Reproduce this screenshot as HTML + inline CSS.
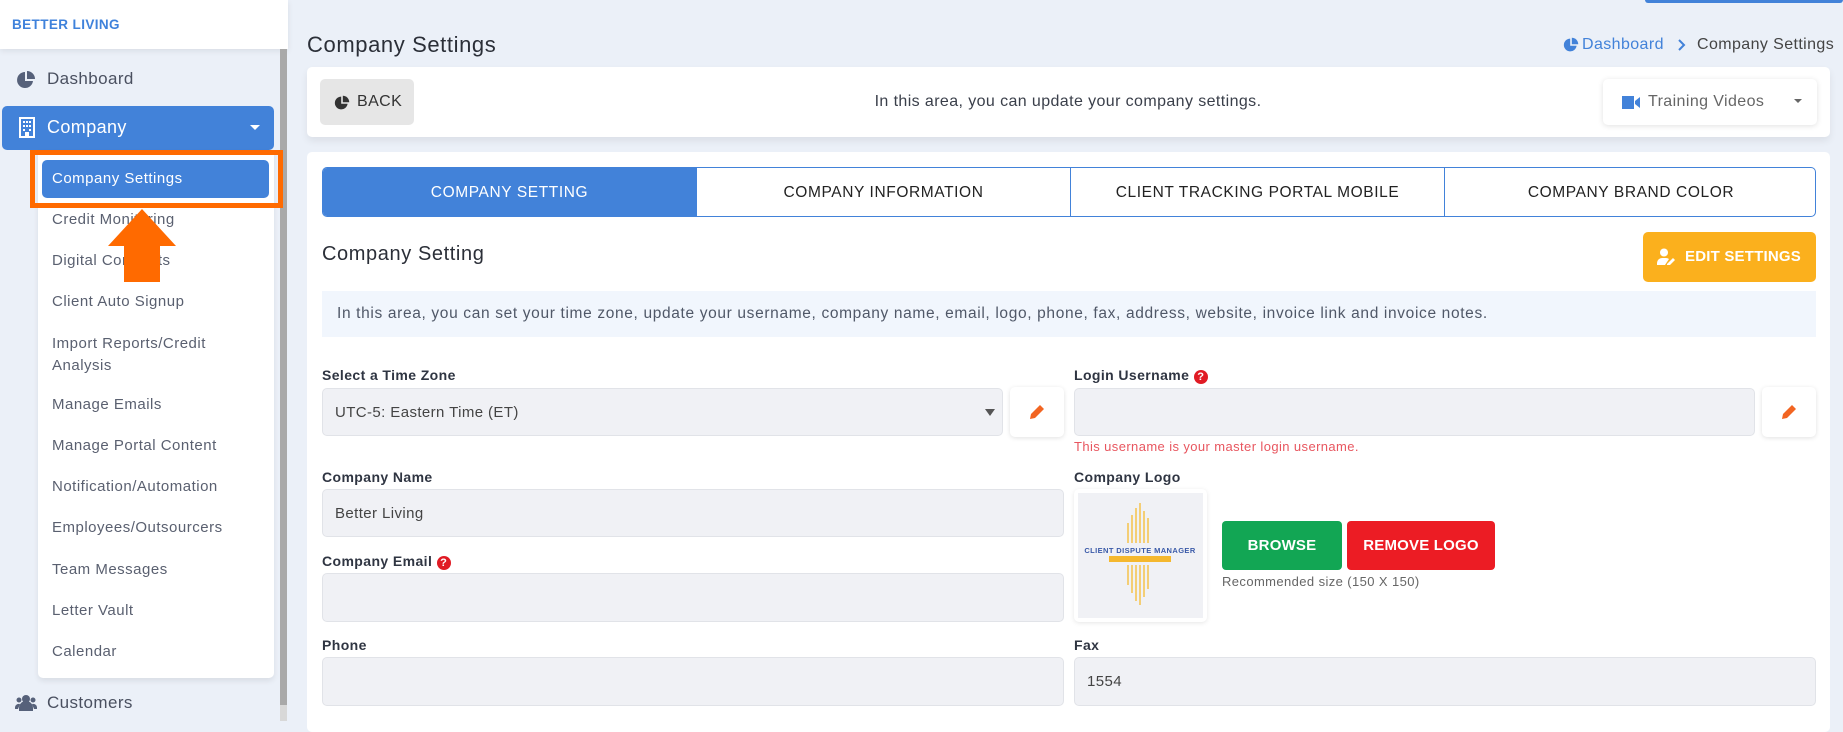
<!DOCTYPE html>
<html><head><meta charset="utf-8"><style>
*{box-sizing:border-box;margin:0;padding:0}
body{width:1843px;height:721px;overflow:hidden;background:#ebf0f8;font-family:"Liberation Sans",sans-serif;color:#3a3f4a;position:relative;letter-spacing:.4px}
.a{position:absolute}
.lbl{font-size:14px;font-weight:bold;color:#2f3542}
.inp{background:#f0f1f5;border:1px solid #e1e3e8;border-radius:5px}
.pen{background:#fff;border-radius:5px;box-shadow:0 1px 5px rgba(0,0,0,.12);display:flex;align-items:center;justify-content:center}
.tab{position:absolute;top:0;height:50px;display:flex;align-items:center;justify-content:center;font-size:15.5px;color:#222;border-left:1px solid #4282d9;letter-spacing:.6px}
.sub{position:absolute;left:52px;font-size:15px;color:#5a6070;letter-spacing:.5px}
.q{display:inline-block;width:14px;height:14px;border-radius:50%;background:#e01b24;color:#fff;font-size:11px;text-align:center;line-height:14px;vertical-align:0;letter-spacing:0}
</style></head><body>
<div class="a" style="left:0;top:0;width:288px;height:49px;background:#fff;box-shadow:0 2px 6px rgba(0,0,0,.08)"></div>
<div class="a" style="left:12px;top:17px;font-size:13.5px;font-weight:bold;color:#3f82db">BETTER LIVING</div>
<div class="a" style="left:280px;top:49px;width:7px;height:656px;background:#a9a9a9"></div>
<div class="a" style="left:280px;top:705px;width:7px;height:16px;background:#d8d8d8"></div>
<svg class="a" style="left:16px;top:70px" width="20" height="20" viewBox="0 0 20 20"><path d="M9 2a8 8 0 1 0 8 9H9z" fill="#56617a"/><path d="M11 1v8h8a8 8 0 0 0-8-8z" fill="#56617a"/></svg>
<div class="a" style="left:47px;top:69px;font-size:17px;color:#4a5060">Dashboard</div>
<div class="a" style="left:2px;top:106px;width:272px;height:44px;background:#4282d9;border-radius:5px"></div>
<svg class="a" style="left:19px;top:117px" width="16" height="21" viewBox="0 0 16 21"><rect x="1" y="1" width="14" height="19" fill="none" stroke="#fff" stroke-width="2"/><g fill="#fff"><rect x="4" y="4" width="2" height="2"/><rect x="7" y="4" width="2" height="2"/><rect x="10" y="4" width="2" height="2"/><rect x="4" y="8" width="2" height="2"/><rect x="7" y="8" width="2" height="2"/><rect x="10" y="8" width="2" height="2"/><rect x="4" y="12" width="2" height="2"/><rect x="10" y="12" width="2" height="2"/><rect x="6" y="15" width="4" height="5"/></g></svg>
<div class="a" style="left:47px;top:117px;font-size:18px;color:#fff">Company</div>
<div class="a" style="left:250px;top:125px;border:5px solid transparent;border-top-color:#fff"></div>
<div class="a" style="left:38px;top:150px;width:236px;height:528px;background:#fff;border-radius:0 0 5px 5px;box-shadow:0 3px 6px rgba(0,0,0,.08)"></div>
<div class="a" style="left:42px;top:160px;width:227px;height:38px;background:#4282d9;border-radius:5px"></div>
<div class="a" style="left:52px;top:170px;font-size:15px;color:#fff;letter-spacing:.5px">Company Settings</div>
<div class="a" style="left:30px;top:150px;width:253px;height:58px;border:5px solid #ff6a00"></div>
<div class="sub" style="top:211px">Credit Monitoring</div>
<div class="sub" style="top:252px">Digital Contracts</div>
<div class="sub" style="top:293px">Client Auto Signup</div>
<div class="sub" style="top:333px;line-height:22px">Import Reports/Credit<br>Analysis</div>
<div class="sub" style="top:396px">Manage Emails</div>
<div class="sub" style="top:437px">Manage Portal Content</div>
<div class="sub" style="top:478px">Notification/Automation</div>
<div class="sub" style="top:519px">Employees/Outsourcers</div>
<div class="sub" style="top:561px">Team Messages</div>
<div class="sub" style="top:602px">Letter Vault</div>
<div class="sub" style="top:643px">Calendar</div>
<svg class="a" style="left:108px;top:209px" width="69" height="74" viewBox="0 0 69 74"><path d="M34 0L68 37H52V73H16V37H0z" fill="#ff6a00"/></svg>
<svg class="a" style="left:15px;top:694px" width="22" height="17" viewBox="0 0 22 17"><g fill="#56617a"><circle cx="11" cy="5" r="4"/><circle cx="4" cy="6" r="2.5"/><circle cx="18" cy="6" r="2.5"/><path d="M4 17v-3a7 7 0 0 1 14 0v3z"/><path d="M0 15v-2a4 4 0 0 1 5-3l-2 5z"/><path d="M22 15v-2a4 4 0 0 0-5-3l2 5z"/></g></svg>
<div class="a" style="left:47px;top:693px;font-size:17px;color:#4a5060">Customers</div>
<div class="a" style="left:1645px;top:0;width:198px;height:3px;background:#4282d9;border-radius:0 0 3px 3px"></div>
<div class="a" style="left:307px;top:32px;font-size:22px;color:#2b2f38;letter-spacing:.6px">Company Settings</div>
<svg class="a" style="left:1563px;top:37px" width="16" height="16" viewBox="0 0 20 20"><path d="M9 2a8 8 0 1 0 8 9H9z" fill="#4282d9"/><path d="M11 1v8h8a8 8 0 0 0-8-8z" fill="#4282d9"/></svg>
<div class="a" style="left:1582px;top:36px;font-size:16px;color:#4282d9">Dashboard</div>
<svg class="a" style="left:1677px;top:38px" width="10" height="14" viewBox="0 0 10 14"><path d="M2 2l5 5-5 5" fill="none" stroke="#4282d9" stroke-width="2"/></svg>
<div class="a" style="left:1697px;top:36px;font-size:16px;color:#444">Company Settings</div>
<div class="a" style="left:307px;top:67px;width:1523px;height:70px;background:#fff;border-radius:5px;box-shadow:0 4px 8px rgba(0,0,0,.07)"></div>
<div class="a" style="left:320px;top:79px;width:94px;height:46px;background:#e6e6e6;border-radius:5px"></div>
<svg class="a" style="left:334px;top:95px" width="16" height="16" viewBox="0 0 20 20"><path d="M9 2a8 8 0 1 0 8 9H9z" fill="#333"/><path d="M11 1v8h8a8 8 0 0 0-8-8z" fill="#333"/></svg>
<div class="a" style="left:357px;top:93px;font-size:16px;color:#333">BACK</div>
<div class="a" style="left:818px;top:93px;width:500px;text-align:center;font-size:16px;color:#3a3f4a">In this area, you can update your company settings.</div>
<div class="a" style="left:1603px;top:79px;width:214px;height:46px;background:#fff;border-radius:5px;box-shadow:0 1px 6px rgba(0,0,0,.12)"></div>
<svg class="a" style="left:1622px;top:96px" width="18" height="13" viewBox="0 0 18 13"><rect width="12" height="13" fill="#4282d9"/><path d="M13 5l5-4v11l-5-4z" fill="#4282d9"/></svg>
<div class="a" style="left:1648px;top:93px;font-size:16px;color:#666">Training Videos</div>
<div class="a" style="left:1794px;top:99px;border:4px solid transparent;border-top-color:#666"></div>
<div class="a" style="left:307px;top:152px;width:1523px;height:580px;background:#fff;border-radius:5px"></div>
<div class="a" style="left:322px;top:167px;width:1494px;height:50px;border:1px solid #4282d9;border-radius:5px;overflow:hidden">
<div class="tab" style="left:0;width:373px;background:#4282d9;color:#fff;border:0">COMPANY SETTING</div>
<div class="tab" style="left:373px;width:374px">COMPANY INFORMATION</div>
<div class="tab" style="left:747px;width:374px">CLIENT TRACKING PORTAL MOBILE</div>
<div class="tab" style="left:1121px;width:373px">COMPANY BRAND COLOR</div>
</div>
<div class="a" style="left:322px;top:243px;font-size:20px;color:#2b2f38;letter-spacing:.6px">Company Setting</div>
<div class="a" style="left:1643px;top:232px;width:173px;height:50px;background:#fbb01d;border-radius:5px"></div>
<svg class="a" style="left:1657px;top:248px" width="18" height="17" viewBox="0 0 18 17"><circle cx="7" cy="4.5" r="4" fill="#fff"/><path d="M0 17v-2a5 5 0 0 1 5-5h4a5 5 0 0 1 3 1l-4 6z" fill="#fff"/><path d="M10 16l6-6 2 2-6 6h-2z" fill="#fff"/></svg>
<div class="a" style="left:1685px;top:248px;font-size:15px;font-weight:bold;color:#fff;letter-spacing:.2px">EDIT SETTINGS</div>
<div class="a" style="left:322px;top:291px;width:1494px;height:46px;background:#f1f6fd"></div>
<div class="a" style="left:337px;top:305px;font-size:15.5px;color:#505868;letter-spacing:.65px;white-space:nowrap">In this area, you can set your time zone, update your username, company name, email, logo, phone, fax, address, website, invoice link and invoice notes.</div>
<div class="a lbl" style="left:322px;top:367px">Select a Time Zone</div>
<div class="a inp" style="left:322px;top:388px;width:681px;height:48px"></div>
<div class="a" style="left:335px;top:404px;font-size:15px;color:#444">UTC-5: Eastern Time (ET)</div>
<div class="a" style="left:985px;top:409px;border:5px solid transparent;border-top:7px solid #555"></div>
<div class="a pen" style="left:1010px;top:387px;width:54px;height:50px"><svg width="18" height="18" viewBox="0 0 18 18"><path d="M12 2l4 4-9 9-5 1 1-5z" fill="#f26522"/><path d="M13 1l4 4" stroke="#fff" stroke-width="1"/></svg></div>
<div class="a lbl" style="left:1074px;top:367px">Login Username <span class="q">?</span></div>
<div class="a inp" style="left:1074px;top:388px;width:681px;height:48px"></div>
<div class="a pen" style="left:1762px;top:387px;width:54px;height:50px"><svg width="18" height="18" viewBox="0 0 18 18"><path d="M12 2l4 4-9 9-5 1 1-5z" fill="#f26522"/><path d="M13 1l4 4" stroke="#fff" stroke-width="1"/></svg></div>
<div class="a" style="left:1074px;top:439px;font-size:13px;color:#e8565f">This username is your master login username.</div>
<div class="a lbl" style="left:322px;top:469px">Company Name</div>
<div class="a inp" style="left:322px;top:489px;width:742px;height:48px"></div>
<div class="a" style="left:335px;top:505px;font-size:15px;color:#444">Better Living</div>
<div class="a lbl" style="left:1074px;top:469px">Company Logo</div>
<div class="a" style="left:1074px;top:489px;width:133px;height:133px;background:#fff;border-radius:5px;box-shadow:0 1px 5px rgba(0,0,0,.1)"></div>
<div class="a" style="left:1078px;top:493px;width:125px;height:125px;background:#f0f1f5"></div>
<svg class="a" style="left:1078px;top:493px" width="125" height="125" viewBox="0 0 125 125"><g stroke="#f5c24a" stroke-width="1.5"><line x1="50" y1="30" x2="50" y2="50"/><line x1="54" y1="22" x2="54" y2="50"/><line x1="58" y1="15" x2="58" y2="50"/><line x1="62" y1="10" x2="62" y2="50"/><line x1="66" y1="18" x2="66" y2="50"/><line x1="70" y1="25" x2="70" y2="50"/><line x1="50" y1="72" x2="50" y2="92"/><line x1="54" y1="72" x2="54" y2="100"/><line x1="58" y1="72" x2="58" y2="108"/><line x1="62" y1="72" x2="62" y2="112"/><line x1="66" y1="72" x2="66" y2="104"/><line x1="70" y1="72" x2="70" y2="96"/></g><text x="62" y="60" font-size="7.5" font-weight="bold" fill="#3a5aa8" text-anchor="middle" font-family="Liberation Sans">CLIENT DISPUTE MANAGER</text><rect x="31" y="63" width="62" height="6" fill="#f5b82e"/></svg>
<div class="a" style="left:1222px;top:521px;width:120px;height:49px;background:#12a654;border-radius:4px;color:#fff;font-size:15px;font-weight:bold;display:flex;align-items:center;justify-content:center;letter-spacing:.2px">BROWSE</div>
<div class="a" style="left:1347px;top:521px;width:148px;height:49px;background:#ec1c24;border-radius:4px;color:#fff;font-size:15px;font-weight:bold;display:flex;align-items:center;justify-content:center;letter-spacing:.2px">REMOVE LOGO</div>
<div class="a" style="left:1222px;top:574px;font-size:13px;color:#666">Recommended size (150 X 150)</div>
<div class="a lbl" style="left:322px;top:553px">Company Email <span class="q">?</span></div>
<div class="a inp" style="left:322px;top:573px;width:742px;height:49px"></div>
<div class="a lbl" style="left:322px;top:637px">Phone</div>
<div class="a inp" style="left:322px;top:657px;width:742px;height:49px"></div>
<div class="a lbl" style="left:1074px;top:637px">Fax</div>
<div class="a inp" style="left:1074px;top:657px;width:742px;height:49px"></div>
<div class="a" style="left:1087px;top:673px;font-size:15px;color:#444">1554</div>
</body></html>
